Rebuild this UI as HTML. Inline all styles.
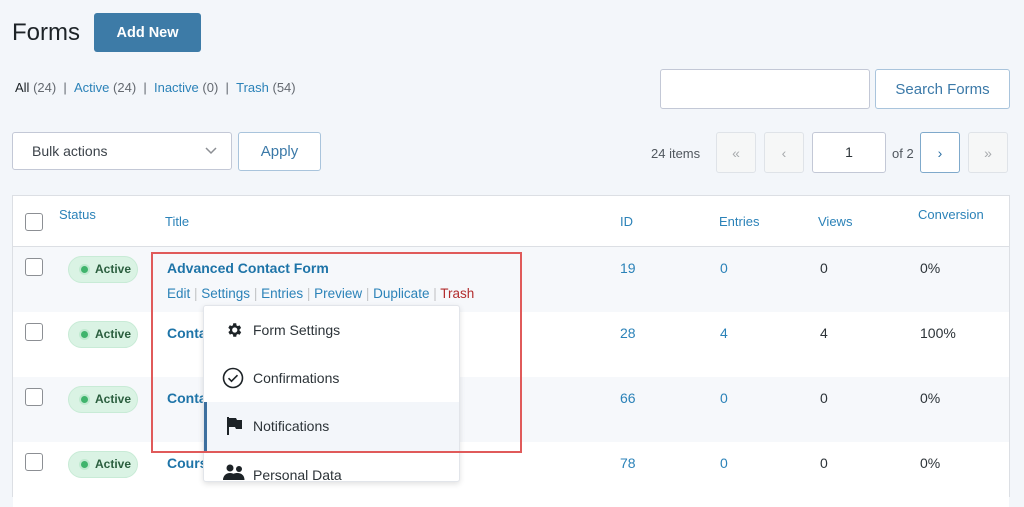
<!DOCTYPE html>
<html><head><style>
*{box-sizing:border-box;margin:0;padding:0}
body{width:1024px;height:497px;overflow:hidden;background:#f3f6fa;font-family:"Liberation Sans",sans-serif;position:relative;color:#2c3338}
.a{position:absolute;white-space:nowrap}
.blue{color:#2b82b8}
.btn{position:absolute;border:1px solid #a9c4dc;background:#fff;border-radius:3px;color:#3b79a8;font-size:15px;display:flex;align-items:center;justify-content:center}
.pg{position:absolute;top:132px;width:40px;height:41px;border:1px solid #dfe3e8;background:#f6f7f7;border-radius:3px;color:#a7aaad;font-size:14px;display:flex;align-items:center;justify-content:center}
.cb{position:absolute;left:25px;width:18px;height:18px;border:1.5px solid #8c8f94;border-radius:3px;background:#fff}
.badge{position:absolute;left:68px;width:70px;height:27px;border-radius:14px;background:#daf3e4;border:1px solid #c8ebd6;font-size:12px;font-weight:bold;color:#2a5e3e;padding-left:26px;line-height:25px}
.badge:before{content:"";position:absolute;left:12px;top:9px;width:7px;height:7px;border-radius:50%;background:#3fb46c;box-shadow:0 0 0 2px #c0ead0}
.row{position:absolute;left:13px;width:996px;height:65px}
.t{font-size:14px}
</style></head><body>
<div class="a" style="left:12px;top:19px;font-size:24px;color:#1d2327">Forms</div>
<div class="a" style="left:94px;top:13px;width:107px;height:39px;background:#3d7ba7;border-radius:3px;color:#fff;font-weight:bold;font-size:14.5px;display:flex;align-items:center;justify-content:center">Add New</div>
<div class="a" style="left:15px;top:80px;font-size:13px;color:#646970"><b style="color:#1d2327;font-weight:normal">All</b> (24) &nbsp;| &nbsp;<span class="blue">Active</span> (24) &nbsp;| &nbsp;<span class="blue">Inactive</span> (0) &nbsp;| &nbsp;<span class="blue">Trash</span> (54)</div>
<div class="a" style="left:660px;top:69px;width:210px;height:40px;background:#fff;border:1px solid #c3c8d6;border-radius:3px"></div>
<div class="btn" style="left:875px;top:69px;width:135px;height:40px">Search Forms</div>
<div class="a" style="left:12px;top:132px;width:220px;height:38px;background:#fff;border:1px solid #c3c8d6;border-radius:3px;font-size:14px;color:#3c434a;padding:10px 0 0 19px">Bulk actions
<svg style="position:absolute;right:14px;top:14px" width="12" height="8" viewBox="0 0 12 8"><path d="M1 1l5 5 5-5" fill="none" stroke="#8c8f94" stroke-width="1.5"/></svg></div>
<div class="btn" style="left:238px;top:132px;width:83px;height:39px;font-size:15px">Apply</div>
<div class="a" style="left:651px;top:146px;font-size:13px;color:#50575e">24 items</div>
<div class="pg" style="left:716px">«</div>
<div class="pg" style="left:764px">‹</div>
<div class="a" style="left:812px;top:132px;width:74px;height:41px;background:#fff;border:1px solid #c3c8d6;border-radius:3px;font-size:14px;text-align:center;line-height:39px">1</div>
<div class="a" style="left:892px;top:146px;font-size:13px;color:#50575e">of 2</div>
<div class="pg" style="left:920px;background:#fff;border-color:#7fa9cb;color:#2b6ea3">›</div>
<div class="pg" style="left:968px">»</div>
<div class="a" style="left:12px;top:195px;width:998px;height:302px;background:#fff;border:1px solid #dcdfe4"></div>
<div class="a" style="left:13px;top:246px;width:996px;height:1px;background:#dcdfe4"></div>
<div class="cb" style="top:213px"></div>
<div class="a blue t" style="left:59px;top:207px;font-size:13px">Status</div>
<div class="a blue t" style="left:165px;top:214px;font-size:13px">Title</div>
<div class="a blue t" style="left:620px;top:214px;font-size:13px">ID</div>
<div class="a blue t" style="left:719px;top:214px;font-size:13px">Entries</div>
<div class="a blue t" style="left:818px;top:214px;font-size:13px">Views</div>
<div class="a blue t" style="left:918px;top:207px;font-size:13px">Conversion</div>

<div class="row" style="top:247px;background:#f6f8fb"></div>
<div class="row" style="top:312px;background:#fff"></div>
<div class="row" style="top:377px;background:#f6f8fb"></div>
<div class="row" style="top:442px;background:#fff"></div>

<div class="cb" style="top:258px"></div><div class="badge" style="top:256px">Active</div>
<div class="cb" style="top:323px"></div><div class="badge" style="top:321px">Active</div>
<div class="cb" style="top:388px"></div><div class="badge" style="top:386px">Active</div>
<div class="cb" style="top:453px"></div><div class="badge" style="top:451px">Active</div>

<div class="a blue" style="left:167px;top:260px;font-size:14px;font-weight:bold;color:#1e74a8">Advanced Contact Form</div>
<div class="a blue" style="left:167px;top:286px;font-size:13.5px">Edit <span style="color:#c3c4c7">|</span> Settings <span style="color:#c3c4c7">|</span> Entries <span style="color:#c3c4c7">|</span> Preview <span style="color:#c3c4c7">|</span> Duplicate <span style="color:#c3c4c7">|</span> <span style="color:#b32d2e">Trash</span></div>
<div class="a" style="left:167px;top:325px;font-size:14px;font-weight:bold;color:#1e74a8">Conta</div>
<div class="a" style="left:167px;top:390px;font-size:14px;font-weight:bold;color:#1e74a8">Conta</div>
<div class="a" style="left:167px;top:455px;font-size:14px;font-weight:bold;color:#1e74a8">Cours</div>

<div class="a blue t" style="left:620px;top:260px">19</div><div class="a blue t" style="left:720px;top:260px">0</div><div class="a t" style="left:820px;top:260px">0</div><div class="a t" style="left:920px;top:260px">0%</div>
<div class="a blue t" style="left:620px;top:325px">28</div><div class="a blue t" style="left:720px;top:325px">4</div><div class="a t" style="left:820px;top:325px">4</div><div class="a t" style="left:920px;top:325px">100%</div>
<div class="a blue t" style="left:620px;top:390px">66</div><div class="a blue t" style="left:720px;top:390px">0</div><div class="a t" style="left:820px;top:390px">0</div><div class="a t" style="left:920px;top:390px">0%</div>
<div class="a blue t" style="left:620px;top:455px">78</div><div class="a blue t" style="left:720px;top:455px">0</div><div class="a t" style="left:820px;top:455px">0</div><div class="a t" style="left:920px;top:455px">0%</div>

<div class="a" style="left:203px;top:305px;width:257px;height:177px;background:#fff;border:1px solid #e2e5ea;border-radius:3px;box-shadow:0 2px 6px rgba(0,0,0,.12);overflow:hidden">
 <div class="a" style="left:0;top:96px;width:257px;height:49px;background:#f3f6fa;border-left:3px solid #3d6f9e"></div>
 <svg class="a" style="left:21px;top:15px" width="18" height="18" viewBox="0 0 24 24"><path fill="#1d2327" d="M19.4 13a7.5 7.5 0 0 0 0-2l2.1-1.6-2-3.5-2.5 1a7.4 7.4 0 0 0-1.7-1L15 3h-4l-.4 2.7a7.4 7.4 0 0 0-1.7 1l-2.5-1-2 3.5L6.6 11a7.5 7.5 0 0 0 0 2l-2.1 1.6 2 3.5 2.5-1a7.4 7.4 0 0 0 1.700 1L11 21h4l.4-2.7a7.4 7.4 0 0 0 1.7-1l2.5 1 2-3.5zM13 15.5a3.5 3.5 0 1 1 0-7 3.5 3.5 0 0 1 0 7z"/></svg>
 <div class="a" style="left:49px;top:16px;font-size:14px;color:#2c3338">Form Settings</div>
 <svg class="a" style="left:18px;top:61px" width="22" height="22" viewBox="0 0 22 22"><circle cx="11" cy="11" r="9.5" fill="none" stroke="#1d2327" stroke-width="1.6"/><path d="M6.5 11.2l3 3 6-6" fill="none" stroke="#1d2327" stroke-width="1.6"/></svg>
 <div class="a" style="left:49px;top:64px;font-size:14px;color:#2c3338">Confirmations</div>
 <svg class="a" style="left:22px;top:111px" width="16" height="18" viewBox="0 0 16 18"><path fill="#1d2327" d="M1 0h2v18H1zM3 1h7l1 2h5v9h-6l-1-2H3z"/></svg>
 <div class="a" style="left:49px;top:112px;font-size:14px;color:#2c3338">Notifications</div>
 <svg class="a" style="left:18px;top:158px" width="24" height="20" viewBox="0 0 24 20"><circle cx="8" cy="4" r="3.5" fill="#1d2327"/><circle cx="17" cy="5" r="3" fill="#1d2327"/><path fill="#1d2327" d="M1 16c0-4 3-7 7-7s7 3 7 7zM13 16c0-2.5-.8-4.5-2-6 1.5-.8 3-1 4.5-1 4 0 7 2.5 7 7z"/></svg>
 <div class="a" style="left:49px;top:161px;font-size:14px;color:#2c3338">Personal Data</div>
</div>
<div class="a" style="left:151px;top:252px;width:371px;height:201px;border:2px solid #e05a5a"></div>
</body></html>
